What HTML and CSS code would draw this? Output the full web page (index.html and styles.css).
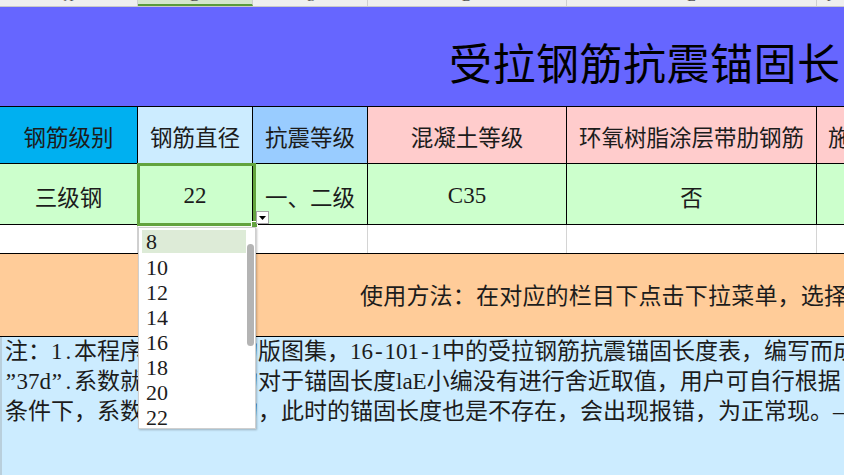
FILE: index.html
```html
<!DOCTYPE html>
<html lang="zh-CN">
<head>
<meta charset="utf-8">
<title>受拉钢筋抗震锚固长度</title>
<link rel="stylesheet" href="styles.css">
</head>
<body>
<div class="sheet">
  <div class="row colhead">
    <div class="ch"><span>A</span></div>
    <div class="ch sel"><span>B</span></div>
    <div class="ch"><span>C</span></div>
    <div class="ch"><span>D</span></div>
    <div class="ch"><span>E</span></div>
    <div class="ch last"><span>F</span></div>
  </div>
  <div class="title">受拉钢筋抗震锚固长</div>
  <div class="row head">
    <div class="cell c-a">钢筋级别</div>
    <div class="cell c-b">钢筋直径</div>
    <div class="cell c-c">抗震等级</div>
    <div class="cell c-pink">混凝土等级</div>
    <div class="cell c-pink">环氧树脂涂层带肋钢筋</div>
    <div class="cell c-pink clip">施工扰动</div>
  </div>
  <div class="row vals">
    <div class="cell">三级钢</div>
    <div class="cell num">22</div>
    <div class="cell">一、二级</div>
    <div class="cell num">C35</div>
    <div class="cell">否</div>
    <div class="cell"></div>
  </div>
  <div class="row blank">
    <div class="cell"></div>
    <div class="cell"></div>
    <div class="cell"></div>
    <div class="cell"></div>
    <div class="cell"></div>
    <div class="cell"></div>
  </div>
  <div class="usage">使用方法：在对应的栏目下点击下拉菜单，选择相应的条件即可</div>
  <div class="notes">
    <p>注：1<span class="hw">.</span>本程序依据最新的版图集，16<span class="hw">-</span>101<span class="hw">-</span>1中的受拉钢筋抗震锚固长度表，编写而成</p>
    <p><span class="hw">”</span>37d<span class="hw">”</span><span class="hw">.</span>系数就是这样来的对于锚固长度laE小编没有进行舍近取值，用户可自行根据</p>
    <p>条件下，系数是不存在的，此时的锚固长度也是不存在，会出现报错，为正常现。—</p>
  </div>

  <div class="selbox"><span class="handle"></span></div>
  <div class="ddbtn"><svg width="7" height="4" viewBox="0 0 7 4"><path d="M0 0H7L3.5 4Z" fill="#000"/></svg></div>
  <div class="dropdown">
    <ul class="opts">
      <li class="hi">8</li>
      <li>10</li>
      <li>12</li>
      <li>14</li>
      <li>16</li>
      <li>18</li>
      <li>20</li>
      <li>22</li>
    </ul>
    <div class="thumb"></div>
  </div>
</div>
</body>
</html>
```
FILE: styles.css
```css
html, body {
  margin: 0;
  padding: 0;
}
body {
  width: 844px;
  height: 475px;
  overflow: hidden;
  background: #ffffff;
  font-family: "Liberation Serif", "Noto Sans CJK SC", serif;
}
.sheet {
  position: relative;
  width: 844px;
  height: 475px;
  overflow: hidden;
  display: flex;
  flex-direction: column;
}
.row {
  display: grid;
  grid-template-columns: 138px 115px 115px 199px 250px 27px;
}
.colhead {
  height: 7px;
  background: #efefef;
  box-sizing: border-box;
  border-bottom: 1px solid #c9c9c9;
}
.ch {
  overflow: hidden;
  box-sizing: border-box;
  border-right: 1px solid #cfcfcf;
  text-align: center;
  color: #555;
  font-size: 14px;
  line-height: 14px;
}
.ch span {
  display: block;
  margin-top: -10px;
}
.ch.sel {
  background: #d5e6cd;
  border-bottom: 2px solid #5b9b3c;
}
.ch.last {
  border-right: none;
}
.title {
  height: 100px;
  box-sizing: border-box;
  background: #6666ff;
  border-bottom: 1px solid #000;
  padding: 8px 0 0 449px;
  white-space: nowrap;
  overflow: hidden;
  display: flex;
  align-items: center;
  font-family: "Noto Sans CJK SC", sans-serif;
  font-size: 43px;
  letter-spacing: 0.5px;
  color: #000;
}
.cell {
  box-sizing: border-box;
  border-right: 1px solid #000;
  display: flex;
  align-items: center;
  justify-content: center;
  white-space: nowrap;
  overflow: hidden;
  font-family: "Liberation Serif", "Noto Sans CJK SC", serif;
  font-size: 22.5px;
  color: #1c1c1c;
}
.cell:last-child {
  border-right: none;
}
.head {
  height: 57px;
  border-bottom: 1px solid #000;
  box-sizing: border-box;
}
.head .cell {
  padding-top: 2px;
}
.c-a { background: #00b0f0; }
.c-b { background: #ccecff; }
.c-c { background: #99ccff; }
.c-pink { background: #ffcccc; }
.clip {
  justify-content: flex-start;
  padding-left: 11px;
}
.vals {
  height: 61px;
  box-sizing: border-box;
  border-bottom: 1px solid #000;
  background: #ccffcc;
}
.vals .cell {
  padding-top: 4px;
}
.num {
  font-size: 23px;
}
.blank {
  height: 29px;
  box-sizing: border-box;
  border-bottom: 1px solid #000;
}
.blank .cell {
  border-right-color: #d4d4d4;
}
.usage {
  height: 83px;
  box-sizing: border-box;
  background: #ffcc99;
  border-bottom: 1px solid #000;
  padding: 0 0 2px 360px;
  display: flex;
  align-items: center;
  white-space: nowrap;
  overflow: hidden;
  font-family: "Noto Sans CJK SC", sans-serif;
  font-size: 23px;
  letter-spacing: 0.2px;
  color: #1c1c1c;
}
.notes {
  flex: 1;
  background: #ccecff;
  border-left: 2px solid #b9cfdc;
  padding: 0 0 0 3px;
  font-family: "Liberation Serif", "Noto Sans CJK SC", serif;
  font-size: 23px;
  line-height: 30px;
  color: #1c1c1c;
  white-space: nowrap;
  overflow: hidden;
}
.notes p {
  margin: 0;
}
.hw {
  display: inline-block;
  width: 0.5em;
  text-align: center;
}
.selbox {
  position: absolute;
  left: 137px;
  top: 163px;
  width: 119px;
  height: 63px;
  box-sizing: border-box;
  border: 3px solid #62a33e;
}
.handle {
  position: absolute;
  right: -5px;
  bottom: -5px;
  width: 5px;
  height: 5px;
  background: #62a33e;
  border: 1px solid #ffffff;
}
.ddbtn {
  position: absolute;
  left: 256px;
  top: 211px;
  width: 13px;
  height: 13px;
  box-sizing: border-box;
  background: #ffffff;
  border: 1px solid #a6a6a6;
  display: flex;
  align-items: center;
  justify-content: center;
}
.dropdown {
  position: absolute;
  left: 138px;
  top: 227px;
  width: 118px;
  height: 202px;
  box-sizing: border-box;
  background: #ffffff;
  border: 1px solid #cfcfcf;
  box-shadow: 1px 1px 2px rgba(0, 0, 0, 0.25);
  overflow: hidden;
}
.opts {
  list-style: none;
  margin: 0;
  padding: 2px 0 0 3px;
}
.opts li {
  width: 104px;
  height: 25px;
  line-height: 25px;
  padding-left: 4px;
  box-sizing: border-box;
  font-family: "Liberation Serif", serif;
  font-size: 22px;
  color: #1c1c1c;
}
.opts li.hi {
  background: #ddebd7;
  height: 23px;
  line-height: 23px;
  margin-bottom: 2px;
}
.thumb {
  position: absolute;
  left: 108px;
  top: 16px;
  width: 7px;
  height: 102px;
  border-radius: 4px;
  background: #b4b4b4;
}
```
